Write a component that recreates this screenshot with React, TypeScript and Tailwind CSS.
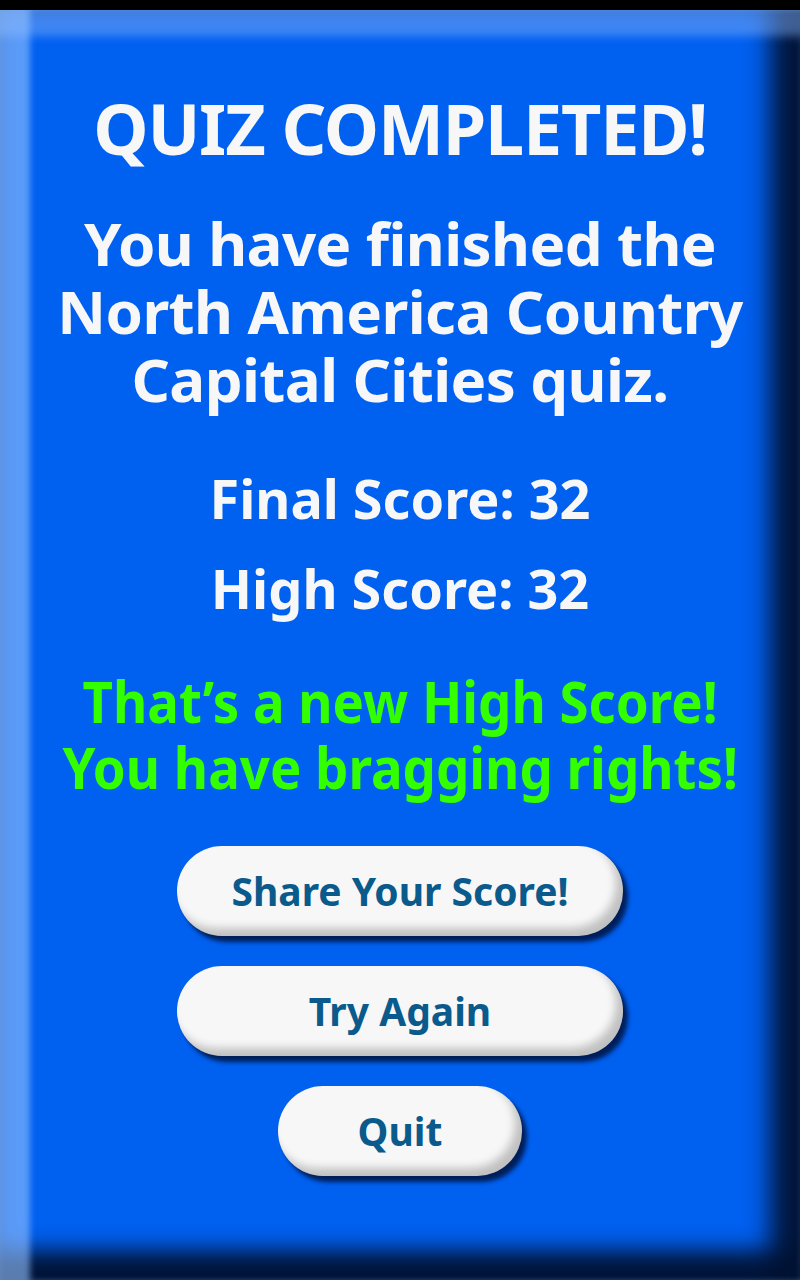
import type { ReactNode } from 'react'

const sans = { fontFamily: '"Noto Sans", "Open Sans", sans-serif' }

function PillButton({ children, wide = true }: { children: ReactNode; wide?: boolean }) {
  return (
    <button
      className={
        (wide ? 'w-[446px] ' : 'w-[244px] ') +
        'h-[90px] rounded-full bg-[#f7f7f7] text-[#0b5a8c] text-[39px] font-bold shadow-[inset_-7px_-8px_8px_rgba(0,0,0,0.22),5px_6px_4px_rgba(0,10,40,0.75)]'
      }
      style={sans}
    >
      {children}
    </button>
  )
}

export default function App() {
  const finalScore = 32
  const highScore = 32

  return (
    <div className="min-h-screen bg-black pt-[10px]">
      <div
        className="h-[1270px] bg-[#0060f0] flex flex-col items-center text-center text-[#f7f7f7] font-bold shadow-[inset_32px_0_6px_-2px_rgba(150,195,255,0.6),inset_0_30px_10px_-4px_rgba(140,185,255,0.45),inset_-36px_0_24px_-6px_rgba(0,18,50,0.95),inset_0_-36px_22px_-6px_rgba(0,18,50,0.95)]"
        style={sans}
      >
        <h1 className="mt-[78px] text-[70px] leading-[80px] tracking-[-1.2px]">QUIZ COMPLETED!</h1>

        <p className="mt-[41px] text-[60px] leading-[68px] tracking-[-0.6px]">
          You have finished the
          <br />
          North America Country
          <br />
          Capital Cities quiz.
        </p>

        <div className="mt-[40px] text-[54px] leading-[90px]">
          <p>Final Score: {finalScore}</p>
          <p>High Score: {highScore}</p>
        </div>

        <p className="mt-[35px] text-[58px] leading-[66px] text-[#33ff00] scale-x-[0.91]">
          That’s a new High Score!
          <br />
          You have bragging rights!
        </p>

        <div className="mt-[46px] flex flex-col items-center gap-[30px]">
          <PillButton>Share Your Score!</PillButton>
          <PillButton>Try Again</PillButton>
          <PillButton wide={false}>Quit</PillButton>
        </div>
      </div>
    </div>
  )
}
